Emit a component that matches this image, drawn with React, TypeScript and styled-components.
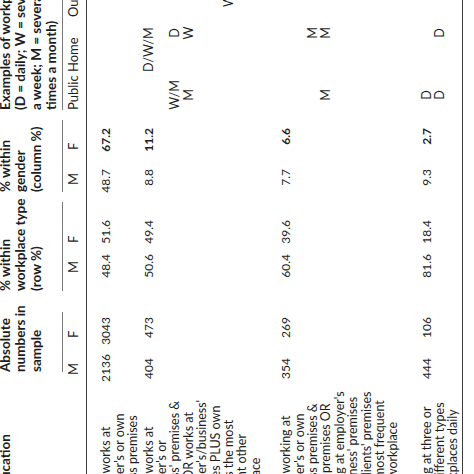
import React from 'react'
import styled, { createGlobalStyle } from 'styled-components'

// __________
//
type Row = {
  gap: number
  desc: string[]
  abs: [string, string]
  row: [string, string]
  col: [string, string]
  pub?: string[]
  home?: string[]
  mid?: string[]
  out?: string[]
}

const rows: Row[] = [
  {
    gap: 12,
    desc: ['Mostly works at', "employer's or own", 'business premises'],
    abs: ['2136', '3043'],
    row: ['48.4', '51.6'],
    col: ['48.7', '67.2'],
  },
  {
    gap: 2,
    desc: [
      'Mostly works at',
      "employer's or",
      "business' premises &",
      'home OR works at',
      "customer's/business'",
      'premises PLUS own',
      'home is the most',
      'frequent other',
      'workplace',
    ],
    abs: ['404', '473'],
    row: ['50.6', '49.4'],
    col: ['8.8', '11.2'],
    pub: ['', '', 'W/M', 'M'],
    home: ['D/W/M'],
    mid: ['', '', 'D', 'W'],
    out: ['', '', '', '', '', '', 'W'],
  },
  {
    gap: 17,
    desc: [
      'Mostly working at',
      "employer's or own",
      'business premises &',
      "clients' premises OR",
      "Working at employer's",
      "its business' premises",
      "PLUS clients' premises",
      'as the most frequent',
      'actual workplace',
    ],
    abs: ['354', '269'],
    row: ['60.4', '39.6'],
    col: ['7.7', '6.6'],
    pub: ['', '', '', 'M'],
    mid: ['', '', 'M', 'M'],
  },
  {
    gap: 20,
    desc: ['Working at three or', 'more different types', 'of workplaces daily'],
    abs: ['444', '106'],
    row: ['81.6', '18.4'],
    col: ['9.3', '2.7'],
    pub: ['D', 'D'],
    mid: ['', 'D'],
  },
]

// __________
//
const Lines: React.FC<{ items?: string[] }> = ({ items = [] }) => (
  <>
    {items.map((txt, i) => (
      <_Line key={i}>{txt}</_Line>
    ))}
  </>
)

const App: React.FC = () => (
  <>
    <GlobalStyle />
    <_Frame>
      <_Sheet>
        <_Table>
          <_HeadRow>
            <_GroupHead $col="1 / 2">Classification</_GroupHead>
            <_GroupHead $col="2 / 4" $ml={10} $rule>
              <div>Absolute</div>
              <div>numbers in</div>
              <div>sample</div>
            </_GroupHead>
            <_GroupHead $col="4 / 6" $ml={21} $mr={2} $rule>
              <div>% within</div>
              <div>workplace type</div>
              <div>(row %)</div>
            </_GroupHead>
            <_GroupHead $col="6 / 8" $ml={8} $mr={2} $rule>
              <div>% within</div>
              <div>gender</div>
              <div>(column %)</div>
            </_GroupHead>
            <_GroupHead $col="8 / 12" $ml={8} $rule>
              <div>Examples of workplace</div>
              <div>(D = daily; W = several times</div>
              <div>a week; M = several</div>
              <div>times a month)</div>
            </_GroupHead>
          </_HeadRow>

          <_SubRow>
            <_SubHead />
            <_SubHead $pl={7}>M</_SubHead>
            <_SubHead $pl={12}>F</_SubHead>
            <_SubHead $pl={39}>M</_SubHead>
            <_SubHead $pl={5}>F</_SubHead>
            <_SubHead $pl={15}>M</_SubHead>
            <_SubHead $pl={15}>F</_SubHead>
            <_SubHead $pl={8}>Public</_SubHead>
            <_SubHead>Home</_SubHead>
            <_SubHead />
            <_SubHead $pl={7}>Outdoors</_SubHead>
          </_SubRow>

          <_Body>
            {rows.map((r, i) => (
              <_BodyRow key={i} $gap={r.gap}>
                <_Cell>
                  <Lines items={r.desc} />
                </_Cell>
                <_Num $pr={8}>{r.abs[0]}</_Num>
                <_Num $pr={5}>{r.abs[1]}</_Num>
                <_Num $pr={6}>{r.row[0]}</_Num>
                <_Num $pr={20}>{r.row[1]}</_Num>
                <_Num $pr={4}>{r.col[0]}</_Num>
                <_Num $pr={10} $bold>
                  {r.col[1]}
                </_Num>
                <_Cell $center>
                  <Lines items={r.pub} />
                </_Cell>
                <_Cell $center>
                  <Lines items={r.home} />
                </_Cell>
                <_Cell $center>
                  <Lines items={r.mid} />
                </_Cell>
                <_Cell $pl={17}>
                  <Lines items={r.out} />
                </_Cell>
              </_BodyRow>
            ))}
          </_Body>
        </_Table>
      </_Sheet>
    </_Frame>
  </>
)

// __________
//
const COLS = '132px 32px 38px 64px 48px 35px 47px 46px 30px 18px 80px'

const GlobalStyle = createGlobalStyle`
  html, body {
    margin: 0;
    padding: 0;
    background: #fff;
  }
  body {
    font-family: Lato, "Open Sans", sans-serif;
    color: #1d1d1d;
  }
`

const _Frame = styled.div`
  width: 474px;
  height: 474px;
  overflow: hidden;
  background: #fff;
`

// the page of the journal is printed sideways
const _Sheet = styled.div`
  width: 474px;
  height: 474px;
  overflow: hidden;
  transform: rotate(-90deg);
`

const _Table = styled.div`
  width: 580px;
  margin: -2px 0 0 -40px;
`

const _Grid = styled.div`
  display: grid;
  grid-template-columns: ${COLS};
`

const _HeadRow = styled(_Grid)``

const _GroupHead = styled.div<{ $col: string; $ml?: number; $mr?: number; $rule?: boolean }>`
  grid-column: ${(p) => p.$col};
  margin-left: ${(p) => p.$ml ?? 0}px;
  margin-right: ${(p) => p.$mr ?? 0}px;
  padding-bottom: 3px;
  border-bottom: 1px solid ${(p) => (p.$rule ? '#7a7a7a' : 'transparent')};
  font-size: 13.5px;
  font-weight: 700;
  line-height: 15.3px;
  white-space: nowrap;
`

const _SubRow = styled(_Grid)`
  border-bottom: 1.5px solid #3c3c3c;
`

const _SubHead = styled.div<{ $pl?: number }>`
  padding: 3px 0 5.3px ${(p) => p.$pl ?? 0}px;
  font-size: 13px;
  line-height: 15px;
  white-space: nowrap;
`

const _Body = styled.div`
  padding-bottom: 2px;
  border-bottom: 1.5px solid #3c3c3c;
`

const _BodyRow = styled(_Grid)<{ $gap: number }>`
  padding-top: ${(p) => p.$gap}px;
`

const _Cell = styled.div<{ $center?: boolean; $pl?: number }>`
  padding-left: ${(p) => p.$pl ?? 0}px;
  text-align: ${(p) => (p.$center ? 'center' : 'left')};
  font-size: 12.5px;
  line-height: 13.4px;
  white-space: nowrap;
`

const _Num = styled.div<{ $pr: number; $bold?: boolean }>`
  padding-right: ${(p) => p.$pr}px;
  text-align: right;
  font-size: 12px;
  font-weight: ${(p) => (p.$bold ? 700 : 400)};
  line-height: 13.4px;
  white-space: nowrap;
`

const _Line = styled.div`
  height: 13.4px;
`

export default App
